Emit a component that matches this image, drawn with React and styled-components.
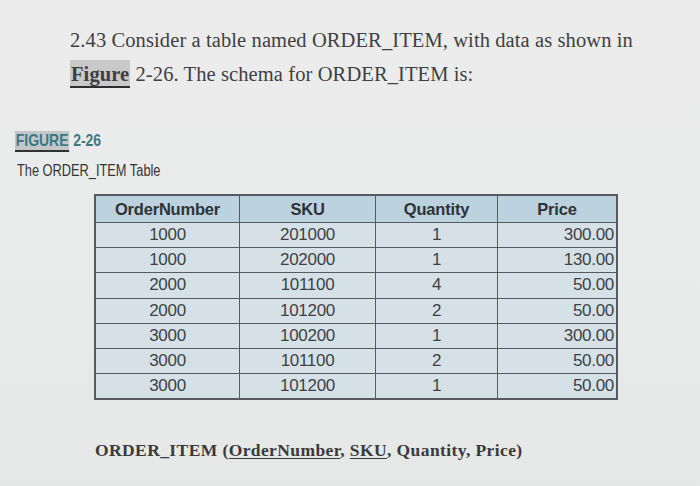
import React from "react";
import styled, { createGlobalStyle } from "styled-components";

const Global = createGlobalStyle`
  html, body { margin: 0; padding: 0; }
  body {
    width: 700px;
    height: 486px;
    overflow: hidden;
    background: linear-gradient(180deg, #ececec 0%, #e9eaea 60%, #e6e7e7 100%);
  }
`;

const Page = styled.div`
  width: 700px;
  height: 486px;
  display: flex;
  flex-direction: column;
  align-items: flex-start;
  box-sizing: border-box;
  padding-top: 23px;
`;

const Question = styled.p`
  margin: 0 0 0 70px;
  font-family: "Liberation Serif", "DejaVu Serif", serif;
  font-size: 20.5px;
  line-height: 34px;
  color: #3f3f41;
  letter-spacing: 0.1px;
`;

const Highlight = styled.span`
  background: #c9c9c9;
  border-bottom: 2px solid #2e2e30;
  padding: 3px 1px 1px 1px;
  font-weight: ${(p) => (p.$bold ? 700 : 400)};
`;

const Figure = styled.div`
  margin: 40px 0 0 15px;
  display: flex;
  flex-direction: column;
  align-items: flex-start;
  gap: 9px;
  font-family: "Liberation Sans", Arial, sans-serif;
`;

const FigureLabel = styled.div`
  font-size: 17px;
  font-weight: 700;
  color: #3a7884;
  line-height: 20px;
  transform: scaleX(0.82);
  transform-origin: left center;
`;

const FigureMark = styled.span`
  background: #c3c7c9;
  border-bottom: 2px solid #303234;
  padding: 0 1px;
`;

const Caption = styled.div`
  font-size: 16px;
  color: #343436;
  line-height: 22px;
  transform: scaleX(0.8);
  transform-origin: left center;
  margin-left: 2px;
`;

const Table = styled.table`
  margin: 12px 0 0 94px;
  border-collapse: collapse;
  table-layout: fixed;
  font-family: "Liberation Sans", Arial, sans-serif;
  color: #3e4144;
  border: 2px solid #555b60;
`;

const Th = styled.th`
  background: #bcd2df;
  height: 26px;
  padding: 0;
  font-weight: 700;
  font-size: 16.5px;
  letter-spacing: -0.2px;
  color: #2f3336;
  border: 1.5px solid #555b60;
  width: ${(p) => p.$w}px;
  text-align: center;
`;

const Td = styled.td`
  background: #d6e1e7;
  height: 24.2px;
  padding: 0 ${(p) => (p.$right ? "2px" : "0")} 0 0;
  border: 1.5px solid #555b60;
  text-align: ${(p) => (p.$right ? "right" : "center")};
  font-size: 17px;
  letter-spacing: -0.3px;
`;

const Schema = styled.p`
  margin: 40px 0 0 95px;
  font-family: "Liberation Serif", "DejaVu Serif", serif;
  font-size: 17.5px;
  font-weight: 700;
  color: #3a3a3c;
  letter-spacing: 0.4px;
`;

const Key = styled.span`
  text-decoration: underline;
  text-underline-offset: 2px;
`;

const rows = [
  ["1000", "201000", "1", "300.00"],
  ["1000", "202000", "1", "130.00"],
  ["2000", "101100", "4", "50.00"],
  ["2000", "101200", "2", "50.00"],
  ["3000", "100200", "1", "300.00"],
  ["3000", "101100", "2", "50.00"],
  ["3000", "101200", "1", "50.00"],
];

export default function App() {
  return (
    <Page>
      <Global />
      <Question>
        2.43 Consider a table named ORDER_ITEM, with data as shown in
        <br />
        <Highlight $bold>Figure</Highlight> 2-26. The schema for ORDER_ITEM is:
      </Question>
      <Figure>
        <FigureLabel>
          <FigureMark>FIGURE</FigureMark> 2-26
        </FigureLabel>
        <Caption>The ORDER_ITEM Table</Caption>
      </Figure>
      <Table>
        <thead>
          <tr>
            <Th $w={143}>OrderNumber</Th>
            <Th $w={135}>SKU</Th>
            <Th $w={121}>Quantity</Th>
            <Th $w={118}>Price</Th>
          </tr>
        </thead>
        <tbody>
          {rows.map((r, i) => (
            <tr key={i}>
              <Td>{r[0]}</Td>
              <Td>{r[1]}</Td>
              <Td>{r[2]}</Td>
              <Td $right>{r[3]}</Td>
            </tr>
          ))}
        </tbody>
      </Table>
      <Schema>
        ORDER_ITEM (<Key>OrderNumber</Key>, <Key>SKU</Key>, Quantity, Price)
      </Schema>
    </Page>
  );
}
